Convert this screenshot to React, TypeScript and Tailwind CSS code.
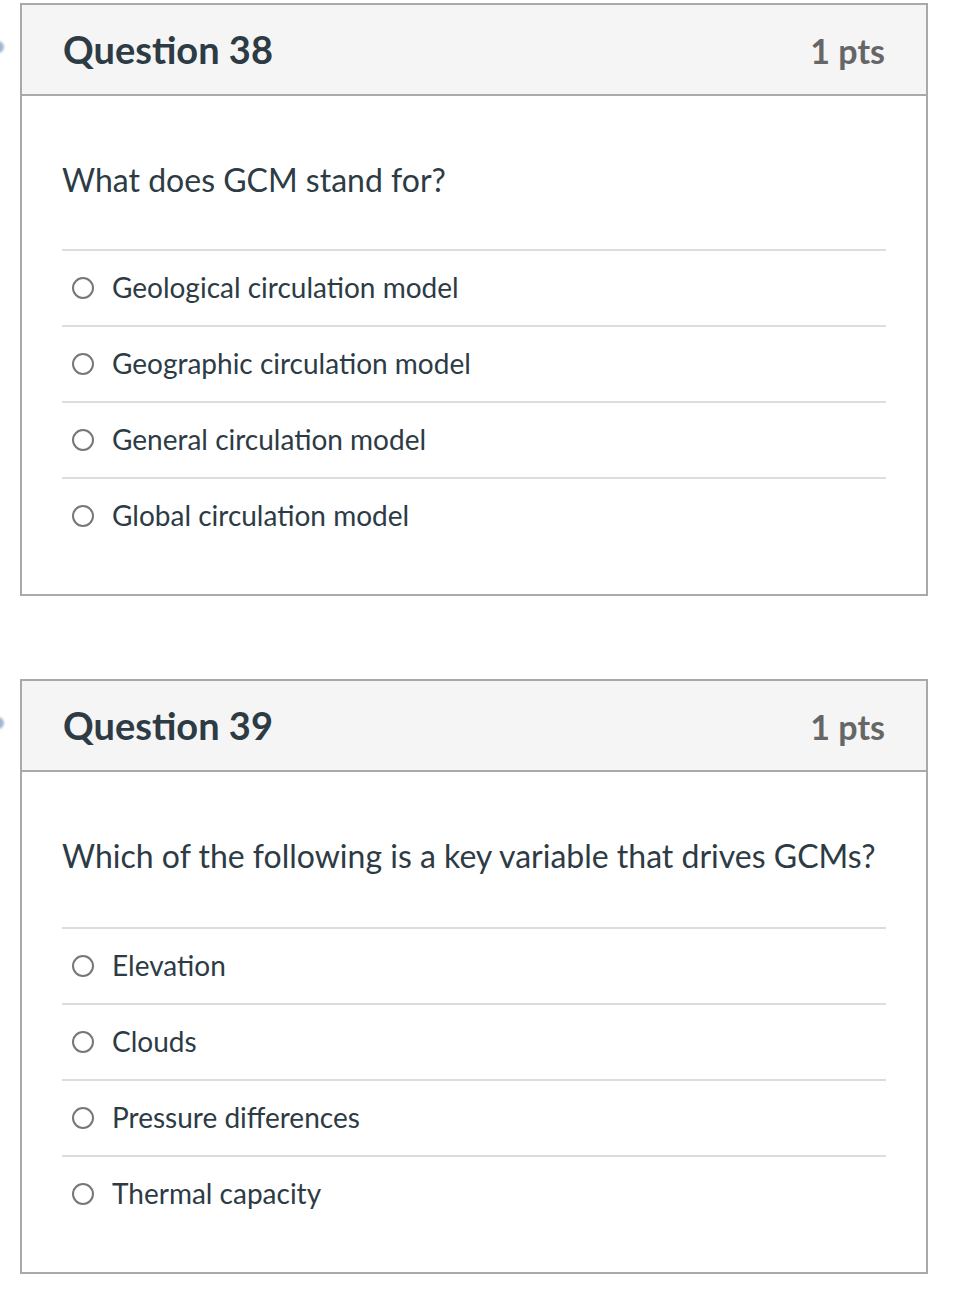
import React from "react";

type Q = { num: number; text: string; answers: string[]; gapClass: string };

const questions: Q[] = [
  {
    num: 38,
    text: "What does GCM stand for?",
    answers: [
      "Geological circulation model",
      "Geographic circulation model",
      "General circulation model",
      "Global circulation model",
    ],
    gapClass: "mt-[49px]",
  },
  {
    num: 39,
    text: "Which of the following is a key variable that drives GCMs?",
    answers: ["Elevation", "Clouds", "Pressure differences", "Thermal capacity"],
    gapClass: "mt-[51px]",
  },
];

function Card({ q }: { q: Q }) {
  return (
    <div className="relative">
      <div className="absolute left-[-22px] top-[38px] h-[12px] w-[6px] rounded-r-full bg-[#8aa6c4] opacity-80 blur-[1px]" />
      <div className="w-[908px] border-2 border-[#a9a9a9] bg-white">
        <div className="flex h-[91px] items-center justify-between border-b-2 border-[#a9a9a9] bg-[#f5f5f5] px-[41px]">
          <div className="pb-[2px] text-[38px] font-bold leading-none text-[#2d3b45]">Question {q.num}</div>
          <div className="pt-[2px] text-[34px] font-bold leading-none text-[#666666]">1 pts</div>
        </div>
        <div className="px-[40px] pb-[41px] pt-[64px]">
          <div className="h-[40px] text-[32px] leading-[40px] text-[#2d3b45]">{q.text}</div>
          <div className={q.gapClass}>
            {q.answers.map((a) => (
              <div key={a} className="flex h-[76px] items-center border-t-2 border-[#dddddd] pl-[10px]">
                <span className="h-[22px] w-[22px] shrink-0 rounded-full border-2 border-[#777777]" />
                <span className="ml-[18px] pb-[3px] text-[28px] leading-none text-[#2d3b45]">{a}</span>
              </div>
            ))}
          </div>
        </div>
      </div>
    </div>
  );
}

export default function App() {
  return (
    <div
      className="min-h-[1296px] w-[960px] bg-white pl-[20px] pt-[3px]"
      style={{ fontFamily: "Lato, 'Open Sans', sans-serif" }}
    >
      <div className="flex flex-col gap-[83px]">
        {questions.map((q) => (
          <Card key={q.num} q={q} />
        ))}
      </div>
    </div>
  );
}
